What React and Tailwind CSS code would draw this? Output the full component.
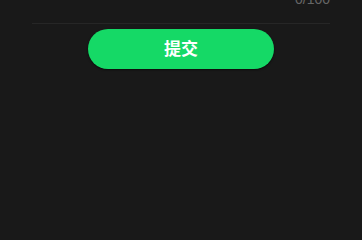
export default function App() {
  return (
    <div className="min-h-screen w-full overflow-hidden bg-[#191919] font-['Liberation_Sans','Noto_Sans_CJK_SC',sans-serif]">
      <div className="px-8">
        <div className="-mt-[11px] text-right text-[14px] leading-[20px] text-[#666666]">0/100</div>
        <div className="mt-[14px] h-px bg-[#262626]" />
      </div>
      <div className="mt-[5px] flex justify-center">
        <button className="h-10 w-[186px] rounded-full bg-[#15d966] pt-px text-[17px] font-bold text-white shadow-[0_1px_2px_rgba(0,0,0,0.6)]">
          提交
        </button>
      </div>
    </div>
  );
}
